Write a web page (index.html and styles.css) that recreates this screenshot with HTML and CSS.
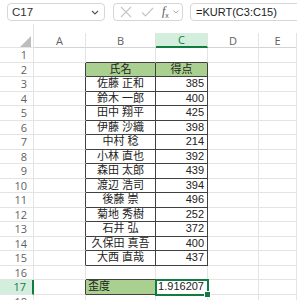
FILE: index.html
```html
<!DOCTYPE html>
<html lang="ja">
<head>
    <meta charset="UTF-8">
    <title>KURT</title>
    <link rel="stylesheet" href="styles.css">
</head>
<body>
    <div class="formula-bar">
        <div class="name-box">
            <span>C17</span>
            <svg class="chev" width="8" height="5" viewBox="0 0 8 5"><path d="M1 1 L4 4 L7 1" fill="none" stroke="#555" stroke-width="1.1"/></svg>
        </div>
        <div class="edit-box">
            <svg width="12" height="12" viewBox="0 0 12 12"><path d="M1 1 L11 11 M11 1 L1 11" stroke="#c4c4c4" stroke-width="1.1"/></svg>
            <svg width="13" height="12" viewBox="0 0 13 12"><path d="M1 6.5 L4.5 10 L12 2" fill="none" stroke="#c4c4c4" stroke-width="1.1"/></svg>
            <span class="fx"><i>f</i><sub>x</sub></span>
            <svg width="6" height="4" viewBox="0 0 6 4"><path d="M0.5 0.5 L3 3 L5.5 0.5" fill="none" stroke="#aaa" stroke-width="1"/></svg>
        </div>
        <div class="formula">=KURT(C3:C15)</div>
    </div>

    <table class="sheet">
        <colgroup>
            <col class="w-hd"><col class="w-a"><col class="w-b"><col class="w-c"><col class="w-d"><col class="w-e">
        </colgroup>
        <tr class="gap">
            <th class="corner" rowspan="2">
                <svg width="11" height="11" viewBox="0 0 11 11"><path d="M11 0 L11 11 L0 11 Z" fill="#bdbdbd"/></svg>
            </th>
            <td class="blank" colspan="5"></td>
        </tr>
        <tr class="col-head">
            <th>A</th><th>B</th><th class="sel">C</th><th>D</th><th>E</th>
        </tr>
        <tr><th class="rh">1</th><td></td><td class="eb"></td><td class="eb"></td><td></td><td></td></tr>
        <tr><th class="rh">2</th><td class="er"></td><td class="box head">氏名</td><td class="box head">得点</td><td></td><td></td></tr>
        <tr><th class="rh">3</th><td class="er"></td><td class="box name">佐藤 正和</td><td class="box num">385</td><td></td><td></td></tr>
        <tr><th class="rh">4</th><td class="er"></td><td class="box name">鈴木 一郎</td><td class="box num">400</td><td></td><td></td></tr>
        <tr><th class="rh">5</th><td class="er"></td><td class="box name">田中 翔平</td><td class="box num">425</td><td></td><td></td></tr>
        <tr><th class="rh">6</th><td class="er"></td><td class="box name">伊藤 沙織</td><td class="box num">398</td><td></td><td></td></tr>
        <tr><th class="rh">7</th><td class="er"></td><td class="box name">中村 稔</td><td class="box num">214</td><td></td><td></td></tr>
        <tr><th class="rh">8</th><td class="er"></td><td class="box name">小林 直也</td><td class="box num">392</td><td></td><td></td></tr>
        <tr><th class="rh">9</th><td class="er"></td><td class="box name">森田 太郎</td><td class="box num">439</td><td></td><td></td></tr>
        <tr><th class="rh">10</th><td class="er"></td><td class="box name">渡辺 浩司</td><td class="box num">394</td><td></td><td></td></tr>
        <tr><th class="rh">11</th><td class="er"></td><td class="box name">後藤 崇</td><td class="box num">496</td><td></td><td></td></tr>
        <tr><th class="rh">12</th><td class="er"></td><td class="box name">菊地 秀樹</td><td class="box num">252</td><td></td><td></td></tr>
        <tr><th class="rh">13</th><td class="er"></td><td class="box name">石井 弘</td><td class="box num">372</td><td></td><td></td></tr>
        <tr><th class="rh">14</th><td class="er"></td><td class="box name">久保田 真吾</td><td class="box num">400</td><td></td><td></td></tr>
        <tr><th class="rh">15</th><td class="er"></td><td class="box name">大西 直哉</td><td class="box num">437</td><td></td><td></td></tr>
        <tr><th class="rh">16</th><td></td><td class="eb"></td><td class="eb"></td><td></td><td></td></tr>
        <tr><th class="rh sel">17</th><td class="er"></td><td class="box head label">歪度</td><td class="box num active">1.916207</td><td></td><td></td></tr>
        <tr><th class="rh">18</th><td></td><td></td><td></td><td></td><td></td></tr>
    </table>
</body>
</html>
```

FILE: styles.css
```css
body {
    margin: 0;
    width: 297px;
    height: 300px;
    overflow: hidden;
    background: #fff;
    color: #222;
    font-family: "Liberation Sans", "Noto Sans CJK JP", sans-serif;
    font-size: 11px;
}

/* formula bar */
.formula-bar {
    display: flex;
    align-items: center;
    gap: 7px;
    height: 24px;
    padding-left: 7px;
    box-sizing: border-box;
    white-space: nowrap;
}

.name-box,
.edit-box,
.formula {
    display: flex;
    align-items: center;
    height: 18px;
    box-sizing: border-box;
    border: 1px solid #d6d6d6;
    border-radius: 4px;
}

.name-box {
    width: 98px;
    justify-content: space-between;
    padding: 0 5px 0 4px;
    font-size: 11.5px;
    color: #333;
    margin-right: 1px;
}

.edit-box {
    width: 70px;
    padding-left: 6px;
    gap: 9px;
}

.fx {
    font-family: "Liberation Serif", serif;
    font-size: 12px;
    color: #555;
    margin-left: -1px;
    margin-right: -5px;
}

.fx sub {
    font-family: "Liberation Sans", sans-serif;
    font-size: 7px;
}

.formula {
    flex: 1;
    padding-left: 5px;
    margin-right: -10px;
    font-size: 11px;
    color: #222;
}

/* sheet */
.sheet {
    border-collapse: separate;
    border-spacing: 0;
    table-layout: fixed;
    width: 297px;
}

.w-hd { width: 34px; }
.w-a { width: 52px; }
.w-b { width: 70px; }
.w-c { width: 52px; }
.w-d { width: 51px; }
.w-e { width: 38px; }

.sheet td,
.sheet th {
    padding: 0;
    height: 14.5px;
    box-sizing: border-box;
    border-right: 1px solid #e4e4e4;
    border-bottom: 1px solid #e4e4e4;
    line-height: 13px;
    white-space: nowrap;
    overflow: hidden;
}

.sheet th {
    font-family: "Open Sans", "Liberation Sans", sans-serif;
    font-weight: normal;
    color: #5f5f5f;
    font-size: 11px;
}

.gap td.blank {
    height: 9px;
    border: none;
}

.corner {
    text-align: right;
    vertical-align: bottom;
    padding: 0 2px 0 0 !important;
    line-height: 0 !important;
}

.col-head th {
    height: 15px;
    border-bottom-color: #d4d4d4;
}

.col-head th.sel {
    background: #d3eedd;
    color: #107c41;
    border-bottom: 2px solid #107c41;
}

.rh {
    text-align: right;
    padding-right: 6px !important;
}

.rh.sel {
    background: #d3eedd;
    color: #107c41;
    border-right: 2px solid #107c41;
}

/* table borders */
.er {
    border-right-color: #404040 !important;
}

.eb {
    border-bottom-color: #404040 !important;
}

.box {
    border-right-color: #404040 !important;
    border-bottom-color: #404040 !important;
}

.head {
    background: #a9d08e;
    text-align: center;
}

.name {
    text-align: center;
}

.label {
    text-align: left;
    padding-left: 2px !important;
}

.num {
    text-align: right;
    padding-right: 3px !important;
}

.active {
    position: relative;
    outline: 2px solid #107c41;
    outline-offset: -1px;
    overflow: visible !important;
}

.active::after {
    content: "";
    position: absolute;
    right: -4px;
    bottom: -4px;
    width: 5px;
    height: 5px;
    background: #107c41;
    border: 1px solid #fff;
}
```
